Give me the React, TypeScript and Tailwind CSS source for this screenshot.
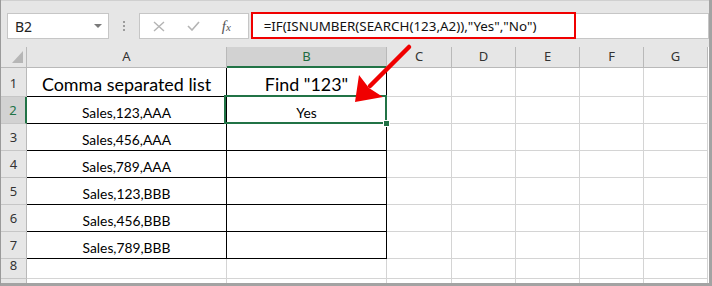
import React from 'react'

const ui = { fontFamily: '"Noto Sans", "Open Sans", Arial, sans-serif' }
const cell = { fontFamily: 'Lato, "Liberation Sans", Arial, sans-serif' }

const cols = [
  { key: 'A', w: 'w-[200px]' },
  { key: 'B', w: 'w-[160px]' },
  { key: 'C', w: 'w-[65px]' },
  { key: 'D', w: 'w-[64px]' },
  { key: 'E', w: 'w-[64px]' },
  { key: 'F', w: 'w-[64px]' },
  { key: 'G', w: 'w-[64px]' },
]

const rows = [
  { n: 1, h: 'h-[29px]', a: 'Comma separated list', b: 'Find "123"', big: true },
  { n: 2, h: 'h-[27px]', a: 'Sales,123,AAA', b: 'Yes' },
  { n: 3, h: 'h-[27px]', a: 'Sales,456,AAA', b: '' },
  { n: 4, h: 'h-[27px]', a: 'Sales,789,AAA', b: '' },
  { n: 5, h: 'h-[27px]', a: 'Sales,123,BBB', b: '' },
  { n: 6, h: 'h-[27px]', a: 'Sales,456,BBB', b: '' },
  { n: 7, h: 'h-[27px]', a: 'Sales,789,BBB', b: '' },
  { n: 8, h: 'h-[20px]', a: '', b: '' },
]

function Toolbar() {
  return (
    <div className="flex items-start h-[47px] pt-[12px] pl-[6px] bg-[#e6e6e6] border-t border-[#d0d0d0]" style={ui}>
      {/* name box */}
      <div className="relative w-[102px] h-[26px] bg-white border border-[#c6c6c6] flex items-center pl-[7px] text-[14px] text-[#222]">
        B2
        <svg className="absolute right-[6px] top-[10px]" width="8" height="4" viewBox="0 0 8 4">
          <path d="M0 0h8L4 4z" fill="#7a7a7a" />
        </svg>
      </div>
      {/* grip */}
      <div className="w-[30px] h-[26px] flex flex-col items-center justify-center gap-[2px]">
        <span className="w-[2px] h-[2px] bg-[#9c9c9c]" />
        <span className="w-[2px] h-[2px] bg-[#9c9c9c]" />
        <span className="w-[2px] h-[2px] bg-[#9c9c9c]" />
      </div>
      {/* cancel / enter / fx */}
      <div className="w-[110px] h-[26px] bg-white border border-[#c6c6c6] flex items-center">
        <svg className="ml-[13px]" width="12" height="11" viewBox="0 0 12 11">
          <path d="M1 1l10 9M11 1L1 10" stroke="#b4b4b4" strokeWidth="1.4" fill="none" />
        </svg>
        <svg className="ml-[22px]" width="13" height="10" viewBox="0 0 13 10">
          <path d="M1 5l4 4 7-8" stroke="#b4b4b4" strokeWidth="1.6" fill="none" />
        </svg>
        <span className="ml-[22px] italic text-[15px] text-[#555] leading-none" style={{ fontFamily: '"Liberation Serif", serif' }}>
          f<span className="text-[11px]">x</span>
        </span>
      </div>
      {/* formula bar */}
      <div className="relative ml-[2px] w-[459px] h-[26px] bg-white border border-[#c6c6c6] flex items-center pl-[12px] text-[13.4px] text-[#111]">
        =IF(ISNUMBER(SEARCH(123,A2)),"Yes","No")
        <div className="absolute -left-[1px] -top-[2px] w-[325px] h-[27px] border-2 border-[#f00000]" />
      </div>
    </div>
  )
}

function HeaderRow() {
  return (
    <div className="flex h-[21px]" style={ui}>
      <div className="w-[26px] border-r border-b border-[#b9b9b9] bg-[#e6e6e6] relative">
        <svg className="absolute left-[11px] top-[4px]" width="11" height="12" viewBox="0 0 11 12">
          <path d="M11 0V12H0z" fill="#b6b6b6" />
        </svg>
      </div>
      {cols.map(c => (
        <div
          key={c.key}
          className={`${c.w} flex items-center justify-center text-[13px] border-r ${
            c.key === 'B'
              ? 'bg-[#d2d2d2] text-[#1e6b3f] border-[#b9b9b9] border-b-2 border-b-[#217346]'
              : 'bg-[#e6e6e6] text-[#333] border-b border-[#b9b9b9]'
          }`}
        >
          {c.key}
        </div>
      ))}
    </div>
  )
}

function DataRow({ r }: { r: (typeof rows)[number] }) {
  const inTable = r.n <= 7
  const sel = r.n === 2
  return (
    <div className={`flex ${r.h}`}>
      <div
        className={`w-[26px] flex items-end justify-center pb-[3px] text-[13px] border-b border-[#c6c6c6] ${
          sel ? 'bg-[#d2d2d2] text-[#217346] border-r-2 border-r-[#217346]' : 'bg-[#e6e6e6] text-[#333] border-r border-r-[#b9b9b9]'
        }`}
        style={ui}
      >
        {r.n}
      </div>
      {cols.map(c => {
        const black = inTable && (c.key === 'A' || c.key === 'B')
        const text = c.key === 'A' ? r.a : c.key === 'B' ? r.b : ''
        return (
          <div
            key={c.key}
            className={`${c.w} relative flex items-end justify-center border-r border-b ${
              black ? 'border-black' : 'border-[#d4d4d4]'
            } ${r.big ? 'text-[17.9px] pb-[2px]' : 'text-[13.8px] pb-[3px]'} text-black leading-none`}
            style={cell}
          >
            {text}
            {sel && c.key === 'B' && (
              <>
                <div className="absolute -left-[3px] -top-[2px] -right-[1px] -bottom-[1px] border-2 border-[#217346] pointer-events-none" />
                <div className="absolute -right-[4px] -bottom-[4px] w-[7px] h-[7px] bg-[#217346] border border-white z-10" />
              </>
            )}
          </div>
        )
      })}
    </div>
  )
}

function Arrow() {
  return (
    <svg className="absolute left-0 top-0 pointer-events-none z-20" width="712" height="286" viewBox="0 0 712 286">
      <path d="M409 47L370 86" stroke="#f00000" strokeWidth="4.5" strokeLinecap="round" />
      <path d="M355 102L359 75L369 88L383 97z" fill="#f00000" />
    </svg>
  )
}

export default function App() {
  return (
    <div className="relative w-[712px] h-[286px] bg-white overflow-hidden">
      <div className="w-[712px] h-[286px] border-l border-l-[#9a9a9a] border-r-[3px] border-b-[3px] border-r-[#a3a3a3] border-b-[#a3a3a3] bg-white overflow-hidden">
        <Toolbar />
        <HeaderRow />
        {rows.map(r => (
          <DataRow key={r.n} r={r} />
        ))}
        <div className="flex h-[4px]">
          <div className="w-[26px] bg-[#e6e6e6] border-r border-[#b9b9b9]" />
          {cols.map(c => (
            <div key={c.key} className={`${c.w} border-r border-[#d4d4d4]`} />
          ))}
        </div>
      </div>
      <Arrow />
    </div>
  )
}
